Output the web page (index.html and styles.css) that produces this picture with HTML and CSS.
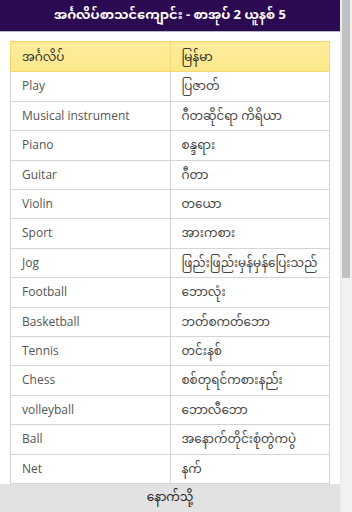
FILE: index.html
```html
<!DOCTYPE html>
<html lang="my">
<head>
    <meta charset="UTF-8">
    <meta name="viewport" content="width=device-width, initial-scale=1.0">
    <title>စာအုပ် 2 ယူနစ် 5</title>
    <link rel="stylesheet" href="styles.css">
</head>
<body>
    <div class="page">
        <div class="title-bar">
            <h1>အင်္ဂလိပ်စာသင်ကျောင်း - စာအုပ် 2 ယူနစ် 5</h1>
        </div>
        <div class="lesson">
            <table class="word-table">
                <thead>
                    <tr>
                        <th>အင်္ဂလိပ်</th>
                        <th>မြန်မာ</th>
                    </tr>
                </thead>
                <tbody>
                    <tr><td>Play</td><td class="mm">ပြဇာတ်</td></tr>
                    <tr><td>Musical instrument</td><td class="mm">ဂီတဆိုင်ရာ ကိရိယာ</td></tr>
                    <tr><td>Piano</td><td class="mm">စန္ဒရား</td></tr>
                    <tr><td>Guitar</td><td class="mm">ဂီတာ</td></tr>
                    <tr><td>Violin</td><td class="mm">တယော</td></tr>
                    <tr><td>Sport</td><td class="mm">အားကစား</td></tr>
                    <tr><td>Jog</td><td class="mm">ဖြည်းဖြည်းမှန်မှန်ပြေးသည်</td></tr>
                    <tr><td>Football</td><td class="mm">ဘောလုံး</td></tr>
                    <tr><td>Basketball</td><td class="mm">ဘတ်စကတ်ဘော</td></tr>
                    <tr><td>Tennis</td><td class="mm">တင်းနစ်</td></tr>
                    <tr><td>Chess</td><td class="mm">စစ်တုရင်ကစားနည်း</td></tr>
                    <tr><td>volleyball</td><td class="mm">ဘောလီဘော</td></tr>
                    <tr><td>Ball</td><td class="mm">အနောက်တိုင်းစုံတွဲကပွဲ</td></tr>
                    <tr><td>Net</td><td class="mm">နက်</td></tr>
                </tbody>
            </table>
        </div>
        <div class="nav-bar">
            <a href="#" class="back-link">နောက်သို့</a>
        </div>
    </div>
    <div class="scroll-rail">
        <div class="scroll-thumb"></div>
    </div>
</body>
</html>
```

FILE: styles.css
```css
:root {
    --clr-title: #2c0a52;
    --clr-head: #fde88a;
    --clr-line: #d4d4d4;
}
body, html {
    margin: 0;
    padding: 0;
    height: 100%;
    overflow: hidden;
    background-color: #ffffff;
    font-family: 'Open Sans', 'Noto Sans Myanmar', 'Padauk', 'Myanmar Text', sans-serif;
}
body {
    display: flex;
}

.page {
    flex: 1;
    min-width: 0;
    display: flex;
    flex-direction: column;
}

/* page scrollbar */
.scroll-rail {
    flex: 0 0 12px;
    background-color: #f1f1f1;
    border-left: 1px solid #e8e8e8;
    box-sizing: border-box;
}
.scroll-thumb {
    height: 278px;
    margin: 0 2px 0 1px;
    background-color: #c1c1c1;
}

.title-bar {
    flex: 0 0 31px;
    background-color: var(--clr-title);
    border-bottom: 1px solid #b9b9c4;
    display: flex;
    align-items: center;
    justify-content: center;
}
.title-bar h1 {
    margin: 0;
    color: #ffffff;
    font-size: 13px;
    font-weight: bold;
}

.lesson {
    flex: 1;
    overflow: hidden;
    padding: 9px 10px 0;
}

.word-table {
    width: 100%;
    border-collapse: collapse;
    font-size: 12px;
    color: #555555;
}
.word-table th,
.word-table td {
    width: 50%;
    border: 1px solid var(--clr-line);
    padding: 6px 11px;
    line-height: 16.4px;
    text-align: left;
}
.word-table th {
    background: linear-gradient(#fdec9c, var(--clr-head));
    border-color: #f6d873;
    color: #333333;
    font-weight: normal;
    padding-top: 7px;
    padding-bottom: 6px;
}
.word-table td.mm {
    color: #444444;
}

.nav-bar {
    flex: 0 0 28px;
    background-color: #e2e2e2;
    display: flex;
    align-items: center;
    justify-content: center;
}
.back-link {
    font-size: 12px;
    color: #222222;
    text-decoration: none;
}
```
